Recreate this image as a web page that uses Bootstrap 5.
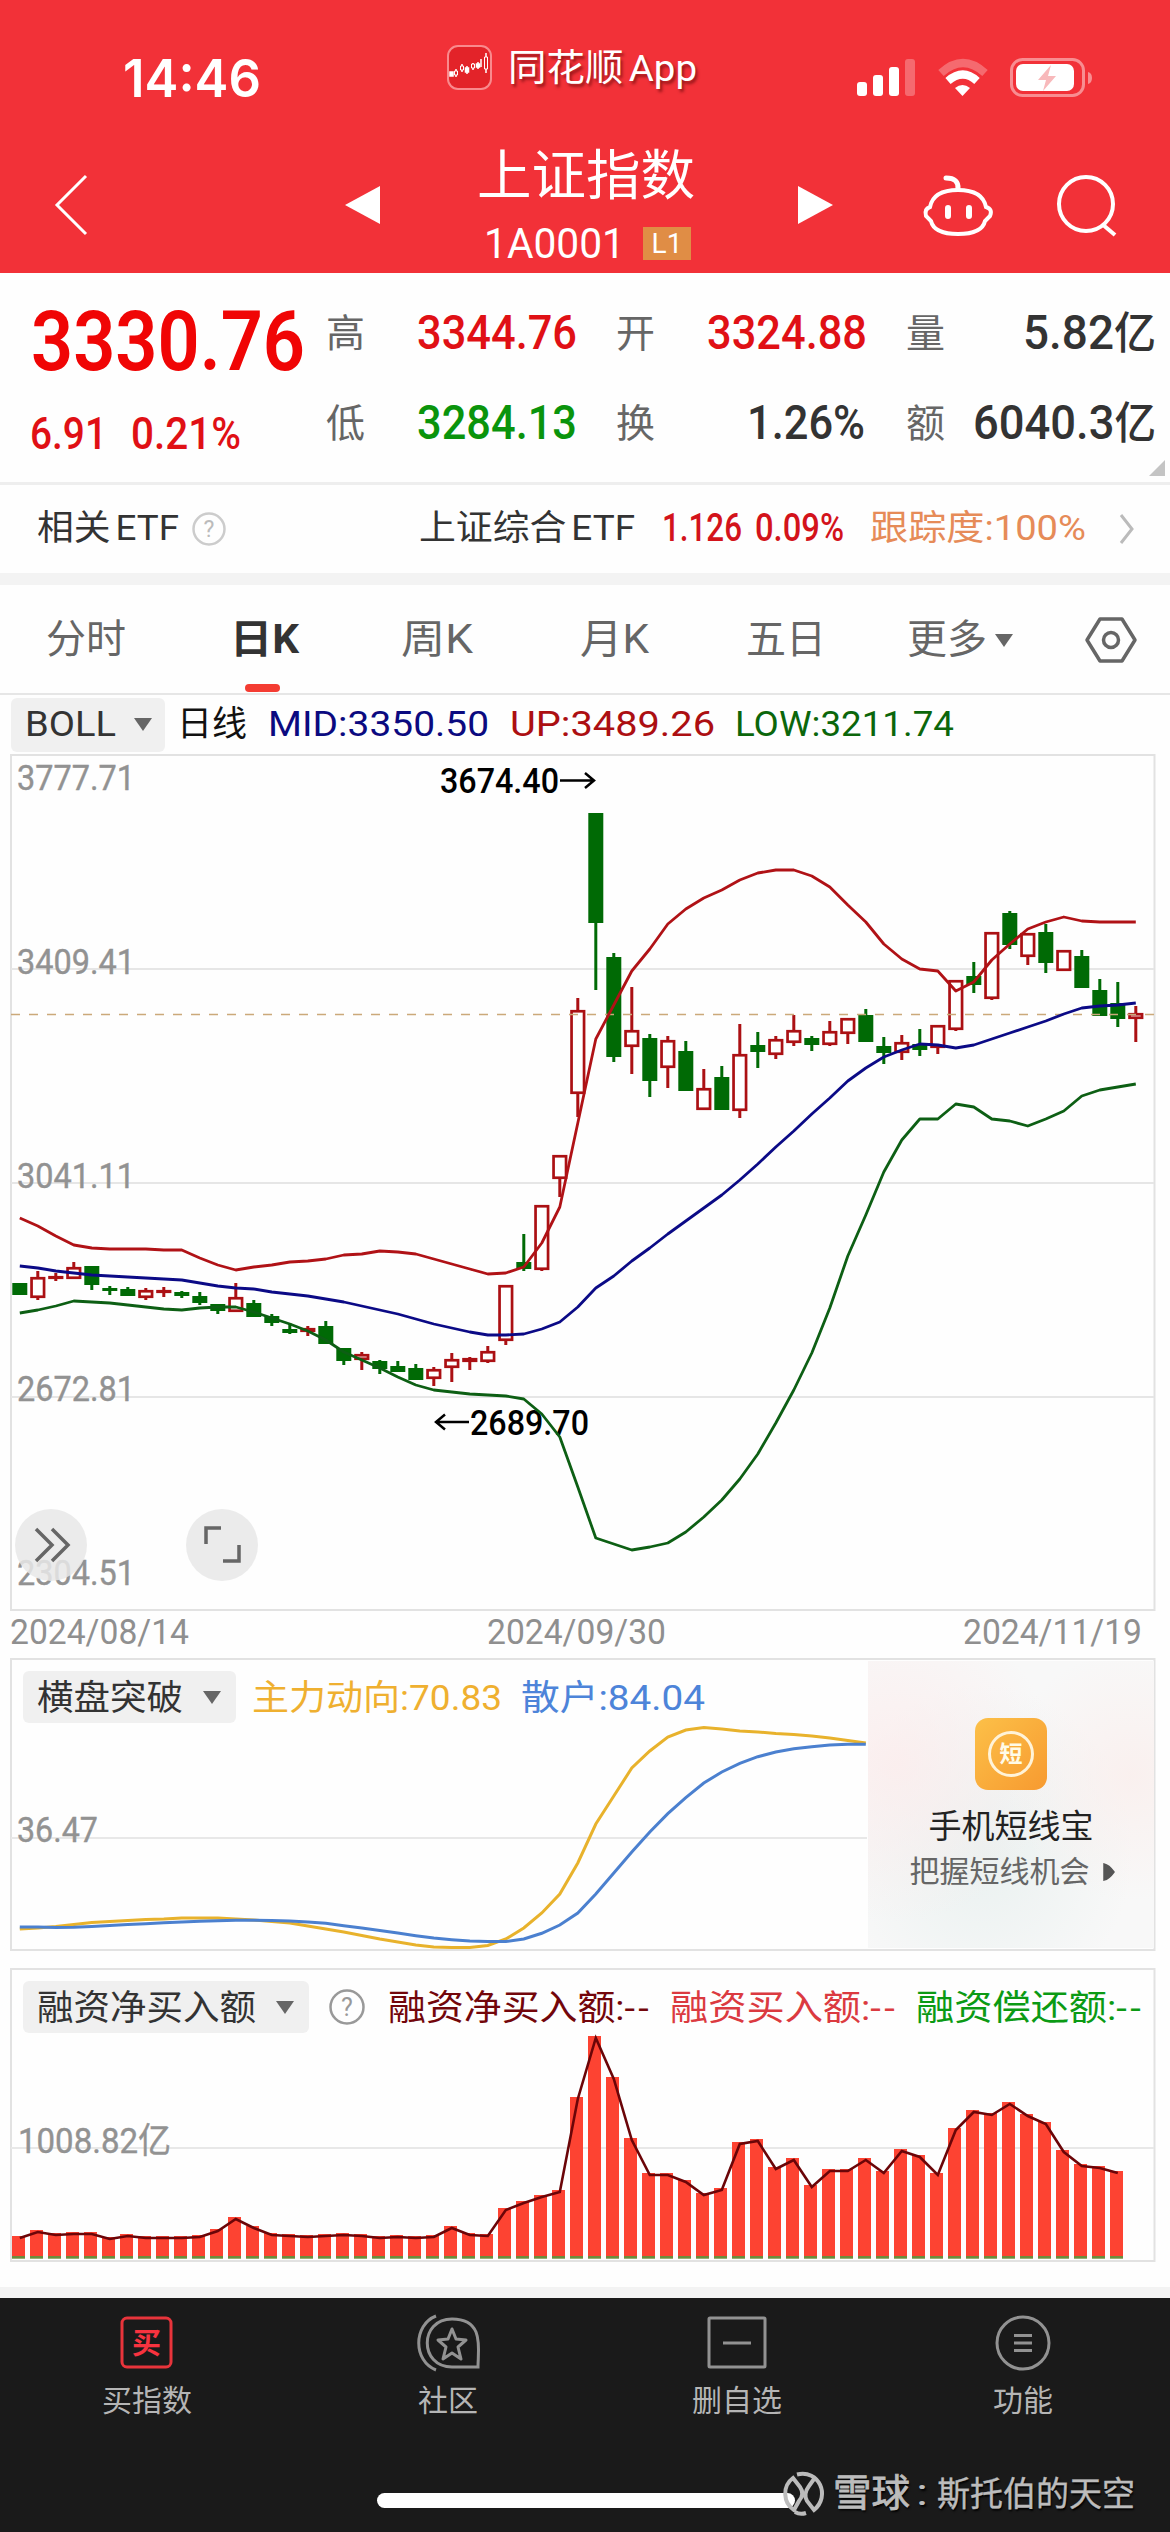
<!DOCTYPE html>
<html lang="zh-CN">
<head>
<meta charset="utf-8">
<meta name="viewport" content="width=device-width, initial-scale=1">
<title>上证指数 1A0001</title>
<link href="https://cdn.jsdelivr.net/npm/bootstrap@5.3.0/dist/css/bootstrap.min.css" rel="stylesheet">
<style>
body{width:1170px;height:2532px;overflow:hidden;background:#fefefe;color:#333;font-family:Roboto,"Noto Sans CJK SC",sans-serif;font-size:35px;line-height:1.2}
svg{display:block;overflow:visible;flex:none}
.fit{display:inline-block;white-space:nowrap;transform-origin:0 50%}
.app-head{height:273px;background:#f23138;color:#fff}
.status{height:137px;padding-top:19px;display:grid;grid-template-columns:123px 324px 410px 1fr;align-items:center}
.status .clock{font:600 52px/60px Inter,sans-serif;padding-top:1px}
.status .from-app{padding-bottom:22px;gap:16px;font-size:37px;line-height:48px;text-shadow:2px 3px 3px rgba(80,0,0,.55)}
.status .from-app .fit{padding-top:3px}
.titlebar{height:136px;display:grid;grid-template-columns:55px 290px 132px 321px 125px 134px 1fr;align-items:center}
.titlebar h1{font-size:54px;line-height:76px;font-weight:400;margin:0;padding-top:1px}
.titlebar .code{font-size:43px;line-height:57px;padding-left:7px;gap:18px;height:58px}
.lvl{background:#e08d45;width:48px;height:33px;font-size:28px;line-height:33px;text-align:center}
.quote{height:212px;border-bottom:3px solid #eee;display:grid;grid-template-columns:326px 1fr;position:relative}
.up{color:#e01015}.down{color:#0a940c}
.last{font-size:84px;line-height:96px;font-weight:600;color:#f00505;padding:21px 0 0 31px}
.chg{font-size:43.5px;line-height:90px;font-weight:500;padding-left:30px;gap:24px}
.facts{padding-top:15px}
.facts .line{height:90px;display:grid;grid-template-columns:91px 158px 41px 91px 158px 41px 60px 190px;align-items:center}
.facts .key{font-size:39px;color:#666;line-height:50px;padding-top:2px}
.facts .val{font-size:48px;line-height:56px;font-weight:500;text-align:right}
.facts .val small{font-size:44px;font-weight:500}
.corner{position:absolute;right:5px;bottom:6px;border-left:16px solid transparent;border-bottom:16px solid #c4c4c4}
.etf{height:88px;display:grid;grid-template-columns:37px 155px 227px 243px 93px 115px 250px 1fr;align-items:center;font-size:35px;color:#333;word-spacing:-4px}
.etf .num{font-size:38px;font-weight:500;color:#d3131b}
.etf .trk{color:#e68b58}
.band{height:12px;background:#f3f3f3}
.tabs{height:110px;padding-top:2px;border-bottom:2px solid #e6e6e6;display:grid;grid-template-columns:46px 184px 171px 179px 166px 161px 178px 1fr;align-items:center;font-size:40px;color:#666}
.tabs .on{color:#333;font-weight:700;position:relative}
.tabs .on::after{content:"";position:absolute;left:15px;width:35px;top:68px;height:8px;border-radius:4px;background:#f43c32}
.tri{width:0;height:0;border:9.5px solid transparent;border-top:13px solid #666;border-bottom:0;display:inline-block}
.chip{background:#f0f0f0;border-radius:6px;color:#333}
.legend{height:59px;display:grid;grid-template-columns:11px 166px 91px 242px 225px 1fr;align-items:center;font-size:35px;color:#111}
.legend .chip{width:154px;height:54px;padding:0 13px 0 14px}
.legend>span{padding-top:1px}
.dates{height:45px;padding:0 28px 5px 10px;color:#8f8f8f;font-size:35px;line-height:41px}
.panel{position:relative}
.over{position:absolute;left:23px;top:14px;height:52px;font-size:35px;white-space:nowrap}
.over .chip{height:52px;padding:0 15px 0 14px}
.over .fit{padding-top:3px}
.promo{position:absolute;left:868px;top:4px;width:286px;height:287px;background:radial-gradient(circle at 10% 36%,rgba(252,236,236,.8),transparent 50%),radial-gradient(circle at 92% 40%,rgba(250,238,236,.8),transparent 40%),radial-gradient(ellipse at 40% 66%,rgba(232,240,239,.9),transparent 62%),#f8f8f8;padding-top:57px}
.promo .name{font-size:33px;line-height:40px;color:#222;margin-top:17px}
.promo .hint{font-size:30px;line-height:36px;color:#666;padding-left:2px;margin-top:7px}
.bottom{background:#1a1a1a;height:234px;padding-top:17px;position:relative;color:#b5b5b5}
.bottom nav{display:grid;grid-template-columns:294px 308px 270px 298px;text-align:center;font-size:30px;line-height:40px}
.bottom nav svg{margin:0 auto 10px}
.home-ind{width:418px;height:15px;border-radius:8px;background:#fff;margin:72px 0 0 377px}
.wm{position:absolute;left:783px;top:171px;height:50px;color:#bcbcbc;text-shadow:1px 2px 2px #000}
svg text{font-family:Roboto,"Noto Sans CJK SC",sans-serif}
.axis{font-size:35px;fill:#929292;stroke:#929292;stroke-width:.4px}
</style>
</head>
<body>
<header class="app-head">
  <div class="status">
    <span></span>
    <span class="clock"><span class="fit" data-w="138">14:46</span></span>
    <div class="from-app d-flex align-items-center">
      <svg width="45" height="45" viewBox="0 0 45 45"><rect x="1" y="1" width="43" height="43" rx="10" fill="#e32329" stroke="#f98a8d" stroke-width="2"/><g stroke="#fff" fill="#fff" stroke-width="1.5"><path d="M4 27v4M9 24v8M15 19v8M20 21v8M26 18v7M31 17v7M34 14v8M39 8v20"/><path d="M3 27h3v4H3zM18.500 23h3v4h-3zM29.500 19h3v3h-3z"/><path fill="#e32329" stroke-width="1" d="M7.500 26h3v4h-3zM13.500 21h3v4h-3zM24.500 19h3v4h-3zM37.500 12h3v12h-3z"/></g></svg>
      <span class="fit" data-w="189" style="word-spacing:-4px">同花顺 App</span>
    </div>
    <svg width="240" height="40" viewBox="856 58 240 40">
      <g fill="#fff"><rect x="856" y="82" width="10" height="14" rx="3"/><rect x="872" y="75" width="10" height="21" rx="3"/><rect x="888" y="67" width="10" height="29" rx="3"/><rect x="904" y="59" width="10" height="37" rx="3" opacity=".28"/></g>
      <g fill="none" stroke="#fff" stroke-width="8"><path d="M940 73Q962 53 984 73" opacity=".28"/><path d="M947 81Q962 68 976 81"/></g>
      <path d="M954 88Q961.500 82 969 88L961.500 96z" fill="#fff"/>
      <rect x="1010.500" y="59.500" width="72" height="36" rx="11" fill="none" stroke="#fff" stroke-opacity=".45" stroke-width="3"/>
      <rect x="1015" y="64" width="58" height="27" rx="7" fill="#fff"/><path d="M1050 65L1037 80h8l-3 11 13-15h-8z" fill="#f8b9bb"/>
      <path d="M1087 72q4 1 4 6t-4 6z" fill="#fff" opacity=".45"/>
    </svg>
  </div>
  <div class="titlebar">
    <span></span>
    <svg width="33" height="60" viewBox="0 0 33 60"><path d="M31 1L2 30l29 29" fill="none" stroke="#fff" stroke-width="3"/></svg>
    <svg width="35" height="38" viewBox="0 0 35 38"><path d="M35 0v38L0 19z" fill="#fff"/></svg>
    <div>
      <h1><span class="fit" data-w="218">上证指数</span></h1>
      <div class="code d-flex align-items-center"><span class="fit" data-w="141">1A0001</span><span class="lvl">L1</span></div>
    </div>
    <svg width="35" height="38" viewBox="0 0 35 38"><path d="M0 0v38l35-19z" fill="#fff"/></svg>
    <svg width="71" height="64" viewBox="0 0 71 64" fill="none" stroke="#fff" stroke-width="4"><path d="M35 16Q36 5 23 5" stroke-width="5" stroke-linecap="round"/><path d="M35 17C17 17 9 24 7 34Q1 36 3 43L8 48Q11 61 35 61T62 48L67 43Q70 36 63 34C61 24 53 17 35 17z"/><path d="M25 35v8M46 35v8" stroke-width="6" stroke-linecap="round"/></svg>
    <svg width="61" height="61" viewBox="0 0 61 61" fill="none" stroke="#fff" stroke-width="4"><circle cx="29" cy="29" r="27"/><path d="M45 49l13 11"/></svg>
  </div>
</header>

<section class="quote">
  <div>
    <div class="last"><span class="fit" data-w="274">3330.76</span></div>
    <div class="chg up d-flex"><span class="fit" data-w="77">6.91</span><span class="fit" data-w="110">0.21%</span></div>
  </div>
  <div class="facts">
    <div class="line"><span class="key">高</span><span class="val up"><span class="fit" data-w="160">3344.76</span></span><span></span><span class="key">开</span><span class="val up"><span class="fit" data-w="160">3324.88</span></span><span></span><span class="key">量</span><span class="val"><span class="fit" data-w="133">5.82<small>亿</small></span></span></div>
    <div class="line"><span class="key">低</span><span class="val down"><span class="fit" data-w="160">3284.13</span></span><span></span><span class="key">换</span><span class="val"><span class="fit" data-w="118">1.26%</span></span><span></span><span class="key">额</span><span class="val"><span class="fit" data-w="183">6040.3<small>亿</small></span></span></div>
  </div>
  <i class="corner"></i>
</section>

<section class="etf">
  <span></span><span class="fit" data-w="142">相关 ETF</span>
  <svg width="34" height="34" viewBox="0 0 34 34"><circle cx="17" cy="17" r="15.500" fill="none" stroke="#ccc" stroke-width="2.500"/><text x="17" y="25" text-anchor="middle" font-size="23" fill="#bbb">?</text></svg>
  <span class="fit" data-w="216">上证综合 ETF</span>
  <span class="num"><span class="fit" data-w="80">1.126</span></span><span class="num"><span class="fit" data-w="89">0.09%</span></span>
  <span class="trk"><span class="fit" data-w="216">跟踪度:100%</span></span>
  <svg width="14" height="30" viewBox="0 0 14 30"><path d="M1 1l11 14L1 29" fill="none" stroke="#bbb" stroke-width="3"/></svg>
</section>
<div class="band"></div>

<nav class="tabs">
  <span></span><span>分时</span><span class="on"><span class="fit" data-w="69">日K</span></span><span><span class="fit" data-w="72">周K</span></span><span><span class="fit" data-w="69">月K</span></span><span>五日</span>
  <span class="d-flex align-items-center">更多<i class="tri ms-2"></i></span>
  <svg width="52" height="46" viewBox="0 0 52 46" fill="none" stroke="#666" stroke-width="3.500"><path d="M15 2h22l13 21-13 21H15L2 23z" stroke-linejoin="round"/><circle cx="26" cy="23" r="7.500"/></svg>
</nav>

<div class="legend">
  <span></span>
  <div class="chip d-flex align-items-center justify-content-between"><span class="fit" data-w="91">BOLL</span><i class="tri"></i></div>
  <span>日线</span>
  <span style="color:#0b0a80"><span class="fit" data-w="221">MID:3350.50</span></span>
  <span style="color:#ac0f12"><span class="fit" data-w="205">UP:3489.26</span></span>
  <span style="color:#0b660b"><span class="fit" data-w="219">LOW:3211.74</span></span>
</div>

<svg id="kline" width="1170" height="858" viewBox="0 754 1170 858">
  <rect x="11" y="755" width="1143.500" height="855" fill="none" stroke="#e2e2e2" stroke-width="2"/>
  <path d="M11 969H1154M11 1183H1154M11 1397H1154" stroke="#e6e6e6" stroke-width="2"/>
  <g class="axis">
    <text x="17" y="790" textLength="118" lengthAdjust="spacingAndGlyphs">3777.71</text>
    <text x="17" y="974" textLength="118" lengthAdjust="spacingAndGlyphs">3409.41</text>
    <text x="17" y="1188" textLength="118" lengthAdjust="spacingAndGlyphs">3041.11</text>
    <text x="17" y="1401" textLength="118" lengthAdjust="spacingAndGlyphs">2672.81</text>
    <text x="17" y="1585" textLength="118" lengthAdjust="spacingAndGlyphs">2304.51</text>
  </g>
  <g id="candles"></g>
  <path d="M11 1014.500H1154" stroke="#cba97a" stroke-width="1.300" stroke-dasharray="9 9"/>
  <g font-size="35" font-weight="500" fill="#000"><text x="440" y="793" textLength="119" lengthAdjust="spacingAndGlyphs">3674.40</text><text x="470" y="1435" textLength="119" lengthAdjust="spacingAndGlyphs">2689.70</text></g>
  <path d="M560 780.500H594M585 773l9 7.500-9 7.500M469 1422H436M445 1414.500l-9 7.500 9 7.500" fill="none" stroke="#000" stroke-width="2.500"/>
  <g id="bands" fill="none" stroke-width="3" stroke-linejoin="round"></g>
  <g fill="#e8e8e8" fill-opacity=".85"><circle cx="51" cy="1545" r="36"/><circle cx="222" cy="1545" r="36"/></g>
  <path d="M36 1529l16 16-16 16M52 1529l16 16-16 16M221 1528h-15v16M223 1561h16v-16" fill="none" stroke="#666" stroke-width="3.500"/>
</svg>
<div class="dates d-flex justify-content-between"><span class="fit" data-w="179">2024/08/14</span><span class="fit" data-w="179">2024/09/30</span><span class="fit" data-w="179">2024/11/19</span></div>

<section class="panel">
  <svg id="flow" width="1170" height="310" viewBox="0 1657 1170 310">
    <rect x="11" y="1659" width="1143.500" height="291" fill="none" stroke="#e2e2e2" stroke-width="2"/>
    <path d="M11 1838H867" stroke="#e8e8e8" stroke-width="2"/>
    <text class="axis" x="17" y="1842" textLength="81" lengthAdjust="spacingAndGlyphs">36.47</text>
  </svg>
  <div class="over d-flex align-items-center">
    <div class="chip d-flex align-items-center gap-3"><span class="fit" data-w="146">横盘突破</span><i class="tri ms-1"></i></div>
    <span class="fit" data-w="250" style="color:#efb030;margin-left:16px">主力动向:70.83</span>
    <span class="fit" data-w="184" style="color:#4d84d9;margin-left:19px">散户:84.04</span>
  </div>
  <div class="promo d-flex flex-column align-items-center">
    <svg width="72" height="72" viewBox="0 0 72 72"><defs><linearGradient id="gold" x1="0" y1="0" x2="1" y2="1"><stop offset="0" stop-color="#fcc048"/><stop offset="1" stop-color="#f79a30"/></linearGradient></defs><rect width="72" height="72" rx="13" fill="url(#gold)"/><circle cx="36" cy="36" r="21.500" fill="none" stroke="#fff3d8" stroke-width="3"/><text x="36" y="44" text-anchor="middle" font-size="23" font-weight="700" fill="#fffbe8">短</text></svg>
    <div class="name">手机短线宝</div>
    <div class="hint d-flex align-items-center"><span class="fit" data-w="180">把握短线机会</span><svg style="margin-left:13px" width="12" height="18" viewBox="0 0 12 18"><path d="M1 1Q6 2 11 9 6 16 1 17z" fill="#555" stroke="#555" stroke-width="1.500"/></svg></div>
  </div>
</section>

<section class="panel">
  <svg id="margin" width="1170" height="320" viewBox="0 1967 1170 320">
    <rect x="11" y="1969" width="1143.500" height="292" fill="none" stroke="#e2e2e2" stroke-width="2"/>
    <path d="M11 2148H1154" stroke="#e8e8e8" stroke-width="2"/>
    <text class="axis" x="18" y="2153" textLength="153" lengthAdjust="spacingAndGlyphs">1008.82亿</text>
  </svg>
  <div class="over d-flex align-items-center">
    <div class="chip d-flex align-items-center gap-3"><span class="fit" data-w="219">融资净买入额</span><i class="tri ms-1"></i></div>
    <svg style="margin-left:20px" width="36" height="36" viewBox="0 0 36 36"><circle cx="18" cy="18" r="16.500" fill="none" stroke="#999" stroke-width="2.500"/><text x="18" y="27" text-anchor="middle" font-size="25" fill="#999">?</text></svg>
    <span class="fit" data-w="264" style="color:#73060b;margin-left:23px">融资净买入额:<span style="letter-spacing:3px">--</span></span>
    <span class="fit" data-w="228" style="color:#db3a40;margin-left:18px">融资买入额:<span style="letter-spacing:3px">--</span></span>
    <span class="fit" data-w="228" style="color:#0b9a14;margin-left:18px">融资偿还额:<span style="letter-spacing:3px">--</span></span>
  </div>
</section>
<div class="band" style="height:11px"></div>

<footer class="bottom">
  <nav>
    <div><svg width="56" height="56" viewBox="0 0 56 56"><rect x="3" y="3" width="49" height="49" rx="5" fill="none" stroke="#e8343b" stroke-width="3"/><text x="27.500" y="38.500" text-anchor="middle" font-size="29" font-weight="700" fill="#f8333f">买</text></svg>买指数</div>
    <div><svg width="62" height="56" viewBox="0 0 62 56" fill="none" stroke="#929292" stroke-width="3"><path d="M19 1C-4 10-4 46 19 55"/><path d="M35 4c33 0 26 30 26 48H35c-33 0-33-48 0-48z"/><path d="M35 14l4 10 10 1-8 7 3 12-9-6-9 6 3-12-8-7 10-1z" stroke-linejoin="round"/></svg>社区</div>
    <div><svg width="60" height="56" viewBox="0 0 60 56" fill="none" stroke="#929292" stroke-width="3"><rect x="2" y="3" width="56" height="49" rx="1"/><path d="M16 28h28"/></svg>删自选</div>
    <div class="ps-1"><svg width="56" height="56" viewBox="0 0 56 56" fill="none" stroke="#929292" stroke-width="3"><circle cx="28" cy="28" r="26"/><path d="M19 20.500h18M19 28h18M19 35.500h18"/></svg>功能</div>
  </nav>
  <div class="home-ind"></div>
  <div class="wm d-flex align-items-center">
    <svg width="42" height="44" viewBox="0 0 42 44" fill="none" stroke="#bcbcbc" stroke-width="4"><path d="M11 38C0 31-1 14 10 6L17 15Q22 22 16 29zM14 2.500C36-3 48 24 31 38L24 29Q20 22 26 14L31 7M12 40q5 3 11 1"/></svg>
    <span class="fit" data-w="77" style="font-size:38px;margin-left:8px;-webkit-text-stroke:.8px #bcbcbc">雪球</span>
    <span class="fit" data-w="12" style="font-size:36px;margin-left:6px">:</span>
    <span class="fit" data-w="198" style="font-size:34px;margin-left:9px;-webkit-text-stroke:.4px #bcbcbc">斯托伯的天空</span>
  </div>
</footer>

<script src="https://cdn.jsdelivr.net/npm/bootstrap@5.3.0/dist/js/bootstrap.bundle.min.js"></script>
<script>
// Squeeze each numeric or label run to its column width, keeping the flow width in step.
document.querySelectorAll('.fit').forEach(function (el) {
  var s = getComputedStyle(el), w = +el.dataset.w, r = document.createRange();
  r.selectNodeContents(el);
  var own = r.getBoundingClientRect().width;
  el.style.width = own + 'px';
  el.style.flex = 'none';
  el.style.transform = 'scaleX(' + (w / own).toFixed(4) + ')';
  el.style.marginRight = (w - own) + 'px';
});

var X0 = 19.8, STEP = 18;
function px(i) { return X0 + STEP * i; }
function line(data, color, width) {
  return '<polyline fill="none" stroke="' + color + '" stroke-width="' + width + '" points="' + data.map(function (y, i) { return px(i) + ',' + y; }).join(' ') + '"/>';
}

// Daily candles: colour, high, body top, body bottom, low.
var K = `g1283,1283,1295,1295 r1271,1277,1298,1300 r1273,1276,1279,1281 r1262,1267,1279,1279 g1266,1266,1285,1290 g1286,1288,1291,1295 g1287,1289,1296,1296 r1288,1290,1298,1300 r1287,1290,1292,1297 g1291,1292,1296,1298 g1292,1296,1303,1305 g1304,1304,1311,1314 r1283,1297,1312,1312 g1300,1303,1317,1317 g1314,1316,1323,1326 g1323,1329,1333,1334 r1326,1328,1332,1336 g1321,1326,1344,1344 g1348,1348,1361,1365 r1352,1354,1360,1370 g1360,1361,1369,1374 g1361,1366,1372,1372 g1364,1368,1380,1380 r1367,1369,1379,1386 r1353,1359,1368,1382 r1357,1358,1362,1370 r1346,1351,1362,1363 r1285,1285,1341,1345 g1234,1262,1269,1271 r1205,1205,1270,1271 r1155,1155,1179,1197 r998,1010,1094,1117 g813,813,923,990 g953,957,1057,1062 r987,1030,1047,1074 g1034,1038,1081,1097 r1036,1040,1068,1088 g1041,1051,1091,1091 r1069,1088,1110,1110 g1066,1077,1110,1110 r1024,1054,1111,1118 g1032,1045,1052,1068 r1036,1039,1055,1059 r1015,1030,1043,1046 g1036,1038,1045,1051 r1021,1031,1045,1046 r1018,1018,1034,1044 g1009,1015,1042,1042 g1037,1046,1053,1064 r1035,1042,1053,1060 g1029,1044,1050,1056 r1025,1025,1048,1054 r980,980,1030,1031 g962,976,985,993 r932,932,999,1000 g911,913,945,949 r933,933,957,965 g924,932,963,973 r950,950,971,971 g950,956,988,988 g979,990,1016,1016 g982,1003,1019,1027 r1006,1013,1019,1042`.split(' ');
document.getElementById('candles').innerHTML = K.map(function (s, i) {
  var v = s.slice(1).split(',').map(Number), x = px(i), c = s[0] === 'g' ? '#006a05' : '#ab1013';
  var o = '<path d="M' + x + ' ' + v[0] + 'V' + v[1] + 'M' + x + ' ' + v[2] + 'V' + v[3] + '" stroke="' + c + '" stroke-width="3"/>';
  if (s[0] === 'g') return o + '<rect x="' + (x - 7.5) + '" y="' + v[1] + '" width="15" height="' + (v[2] - v[1]) + '" fill="' + c + '"/>';
  return o + '<rect x="' + (x - 6.25) + '" y="' + (v[1] + 1.25) + '" width="12.5" height="' + Math.max(v[2] - v[1] - 2.5, .5) + '" fill="#fff" stroke="' + c + '" stroke-width="2.7"/>';
}).join('');

var UP = [1218,1226,1236,1245,1248,1249,1249,1249,1250,1250,1258,1265,1270,1267,1265,1262,1261,1259,1255,1254,1251,1252,1254,1259,1264,1269,1274,1273,1267,1243,1207,1123,1039,1005,971,949,924,909,898,890,880,873,870,870,876,887,905,922,944,959,969,971,991,982,960,944,929,922,917,921,922,922,922];
var MID = [1266,1268,1271,1273,1275,1276,1277,1278,1279,1280,1283,1286,1288,1289,1292,1294,1296,1299,1302,1306,1310,1314,1319,1324,1328,1332,1335,1335,1334,1329,1322,1307,1288,1276,1261,1248,1234,1221,1208,1195,1180,1164,1147,1131,1114,1098,1081,1068,1057,1050,1044,1045,1048,1045,1039,1033,1027,1021,1014,1008,1006,1005,1003];
var LOW = [1313,1310,1306,1301,1302,1303,1305,1307,1309,1310,1308,1307,1307,1312,1318,1324,1331,1340,1352,1360,1368,1377,1385,1390,1392,1394,1395,1396,1399,1414,1437,1487,1538,1544,1550,1547,1543,1532,1517,1500,1479,1454,1423,1390,1353,1308,1256,1215,1172,1140,1119,1119,1104,1107,1119,1121,1126,1119,1111,1096,1090,1087,1084];
document.getElementById('bands').innerHTML = line(UP, '#b01216', 2.8) + line(MID, '#0b0a86', 2.8) + line(LOW, '#0d5f14', 2.8);

var MAIN = [1929,1928,1926.5,1924.5,1922.5,1921.5,1920.5,1919.5,1919,1918,1918,1918,1919,1920,1921.5,1923,1926,1929,1932,1935.5,1939,1942,1945,1947,1947.5,1947.5,1945.5,1939,1928,1913,1894,1863,1824,1796,1768,1751,1737,1730,1727.5,1729,1731,1732,1733.5,1734.5,1736,1738,1740.5,1743];
var RETAIL = [1927,1927,1927.5,1927.3,1926.5,1925.5,1924.5,1923.7,1922.7,1922,1921.2,1920.7,1920.3,1920.3,1920.5,1921,1922,1923.3,1925.7,1928,1930.5,1933,1935.7,1938,1939.7,1941,1941.5,1941.5,1939,1933.3,1925,1913,1894,1873,1852,1832,1813.7,1797.7,1783,1772,1763.3,1756.7,1752,1748.7,1746.7,1745,1744.3,1744.3];
document.getElementById('flow').insertAdjacentHTML('beforeend', line(MAIN, '#e8b22c', 3) + line(RETAIL, '#4b80cf', 3));

var BARS = [276,270,273,272,272,277,274,276,276,276,275,269,257,266,273,274,275,274,273,274,276,275,276,275,266,273,274,248,241,235,230,137,76,117,178,213,213,220,233,228,182,179,207,198,225,209,209,198,211,189,195,213,168,150,153,142,154,162,190,204,206,211];
document.getElementById('margin').insertAdjacentHTML('beforeend', BARS.map(function (t, i) {
  var x = 12 + STEP * i;
  return '<rect x="' + x + '" y="' + (1960 + t) + '" width="13" height="' + (296 - t) + '" fill="#fd4332"/><rect x="' + x + '" y="2256" width="13" height="2.700" fill="#6d8c3c"/>';
}).join('') + line(BARS.map(function (t) { return 1962 + t; }), '#6b0508', 2.6));
</script>
</body>
</html>
